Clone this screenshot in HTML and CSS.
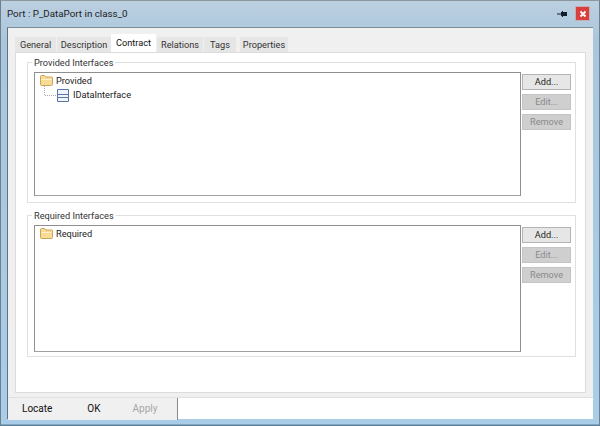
FILE: index.html
```html
<!DOCTYPE html>
<html lang="en">
<head>
<meta charset="utf-8">
<title>Port</title>
<link rel="stylesheet" href="styles.css">
</head>
<body>
<div class="window">
  <header class="titlebar">
    <span class="title">Port : P_DataPort in class_0</span>
    <svg class="pin" width="10" height="8" viewBox="0 0 10 8"><path d="M0 3.500h4v1H0zM4 2h1v4H4zM5 1h1v6H5zM6 2h4v4H6z" fill="#10202c"/></svg>
    <span class="close"><svg width="8" height="8" viewBox="0 0 8 8"><path d="M1.500 1.500l5 5M6.500 1.500l-5 5" stroke="#fff" stroke-width="1.800"/></svg></span>
  </header>
  <div class="client">
    <div class="content">
      <nav class="tabs">
        <span class="tab t1">General</span>
        <span class="tab t2">Description</span>
        <span class="tab active">Contract</span>
        <span class="tab t4">Relations</span>
        <span class="tab t5">Tags</span>
        <span class="tab t6">Properties</span>
      </nav>
      <div class="panel">
        <section class="group g1">
          <span class="legend">Provided Interfaces</span>
          <div class="list l1">
            <div class="node">
              <svg class="folder" width="13" height="12" viewBox="0 0 13 12"><path d="M.5 9.500v-8a1 1 0 0 1 1-1h3l1.500 1.500h5.500a1 1 0 0 1 1 1v6.500a1 1 0 0 1-1 1h-10a1 1 0 0 1-1-1z" fill="#f8dc96" stroke="#c8a45c"/><path d="M1.500 4.500h10" stroke="#fff0c8"/></svg>
              <span>Provided</span>
            </div>
            <div class="node child">
              <svg class="branch" width="13" height="12" viewBox="0 0 13 12"><path d="M.5 0v9.500H13" fill="none" stroke="#a8a8a8" stroke-dasharray="1 1"/></svg>
              <svg class="iface" width="12" height="13" viewBox="0 0 12 13"><path d="M.5.500h11v12H.5z" fill="#f0f4fa" stroke="#5578a8"/><path d="M1 5.500h10M1 8.500h10" stroke="#5578a8"/></svg>
              <span>IDataInterface</span>
            </div>
          </div>
          <div class="buttons">
            <span class="btn">Add...</span>
            <span class="btn off">Edit...</span>
            <span class="btn off">Remove</span>
          </div>
        </section>
        <section class="group g2">
          <span class="legend">Required Interfaces</span>
          <div class="list l2">
            <div class="node">
              <svg class="folder" width="13" height="12" viewBox="0 0 13 12"><path d="M.5 9.500v-8a1 1 0 0 1 1-1h3l1.500 1.500h5.500a1 1 0 0 1 1 1v6.500a1 1 0 0 1-1 1h-10a1 1 0 0 1-1-1z" fill="#f8dc96" stroke="#c8a45c"/><path d="M1.500 4.500h10" stroke="#fff0c8"/></svg>
              <span>Required</span>
            </div>
          </div>
          <div class="buttons">
            <span class="btn">Add...</span>
            <span class="btn off">Edit...</span>
            <span class="btn off">Remove</span>
          </div>
        </section>
      </div>
    </div>
    <footer class="footer">
      <div class="actions">
        <span class="action locate">Locate</span>
        <span class="action ok">OK</span>
        <span class="action apply">Apply</span>
      </div>
    </footer>
  </div>
</div>
</body>
</html>
```
FILE: styles.css
```css
* { box-sizing: border-box; }
html, body { margin: 0; padding: 0; }
body { width: 600px; height: 426px; overflow: hidden; font: 9.2px/12px Roboto, "Liberation Sans", sans-serif; color: #1c1c1c; }
.window { width: 600px; height: 426px; display: flex; flex-direction: column; padding: 1px 6px 6px 7px; border: 1px solid #6f7f8c; border-bottom-color: #5b7f99; border-top-color: #8d979e; background: linear-gradient(#bcd0e0 0, #a9c6dd 40px, #a9cde8 100%); box-shadow: inset 0 -1px 0 #7fa7c4; }
.titlebar { height: 25px; flex: none; display: flex; align-items: center; padding: 0 2px 0 0; }
.title { flex: 1; color: #222; font-size: 9.8px; margin: -2px 0 0 -1px; }
.pin { margin: -2px 9px 0 0; }
.close { width: 13px; height: 13px; margin: -2px 2px 0 0; background: #d8403f; display: flex; align-items: center; justify-content: center; box-shadow: 0 0 0 1px #c9aeb0; }
.client { flex: 1; min-height: 0; display: flex; flex-direction: column; background: #fff; border-left: 1px solid #5d7284; border-top: 1px solid #7c8b98; margin-left: -1px; }
.content { height: 370px; flex: none; background: #f0f0f0; border-bottom: 1px solid #e0e0e0; padding: 8px 7px 4px 7px; display: flex; flex-direction: column; }
.tabs { height: 16px; flex: none; display: flex; gap: 1px; align-items: flex-end; }
.tab { height: 15px; padding: 2px 0 0; text-align: center; background: #e6e6e6; color: #333; }
.t1 { width: 41px; }
.t2 { width: 54px; }
.active { width: 45px; height: 18px; background: #fff; padding-top: 3px; color: #111; position: relative; z-index: 1; margin-left: -1px; }
.t4 { width: 46px; }
.t5 { width: 32px; }
.t6 { width: 48px; margin-left: 3px; }
.panel { flex: 1; background: #fff; border: 1px solid #dcdcdc; padding: 9px 10px 0 11px; display: flex; flex-direction: column; gap: 12px; }
.group { position: relative; border: 1px solid #e0e0e0; padding: 9px 4px 6px 6px; display: flex; gap: 1px; width: 549px; }
.g1 { height: 141px; }
.g2 { height: 142px; }
.legend { position: absolute; left: 4px; top: -6px; padding: 0 2px; background: #fff; color: #333; }
.list { width: 488px; border: 1px solid #8f8f8f; border-bottom-color: #a0a0a0; padding: 0 0 0 5px; background: #fff; }
.l1 { height: 124px; }
.l2 { height: 127px; }
.node { height: 15px; display: flex; align-items: center; gap: 3px; color: #222; }
.child { margin-left: 4px; gap: 0; height: 14px; }
.child span { margin-left: 4px; }
.branch { margin-top: -7px; }
.buttons { width: 49px; display: flex; flex-direction: column; gap: 4px; padding-top: 2px; }
.btn { height: 16px; display: flex; align-items: center; justify-content: center; background: #e6e6e6; border: 1px solid #b4b4b4; color: #1c1c1c; }
.off { background: #cfcfcf; border-color: #c4c4c4; color: #8a8a8a; }
.footer { flex: 1; min-height: 0; background: #fff; }
.actions { width: 170px; height: 22px; display: flex; align-items: center; background: #f0f0f0; border-right: 1px solid #8a8a8a; font-size: 10px; }
.action { color: #111; }
.locate { margin-left: 14px; }
.ok { margin-left: 35px; }
.apply { margin-left: 32px; color: #a6a6a6; }
```
